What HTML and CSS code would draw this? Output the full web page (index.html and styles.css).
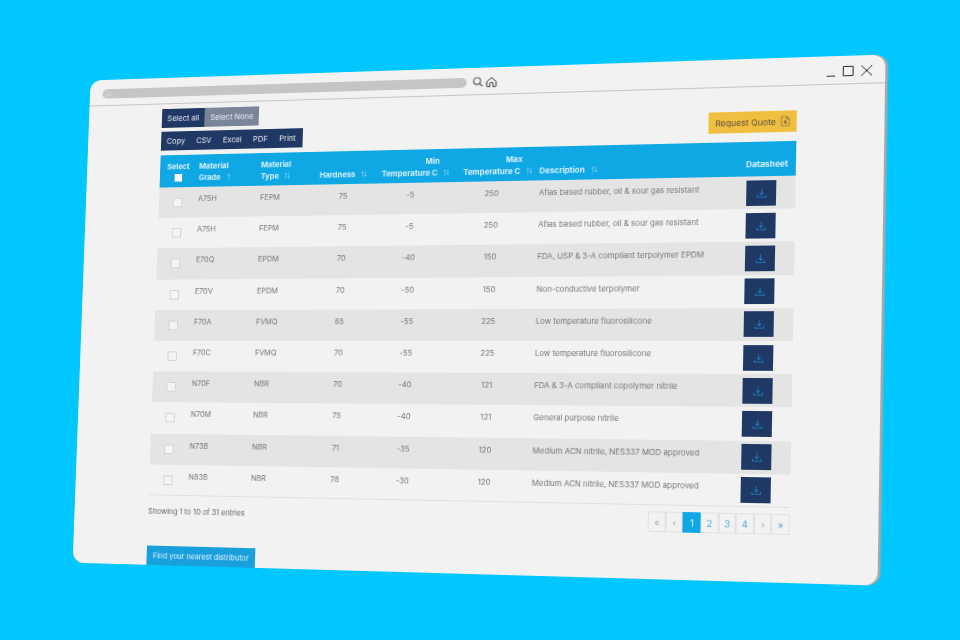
FILE: index.html
```html
<!DOCTYPE html>
<html lang="en">
<head>
  <meta charset="UTF-8" />
  <title>Material Grades</title>
  <link rel="stylesheet" href="styles.css">
</head>
<body>

  <div class="window">
    <div class="titlebar">
      <div class="address">
        <svg class="address-icon" viewBox="0 0 10 8"><path d="M1 1.5h3M1 4h3M1 6.5h8M6 1.5h3M6 4h3" /></svg>
      </div>
      <svg class="nav-icon search-icon" viewBox="0 0 12 12"><circle cx="5" cy="5" r="3.8" /><path d="M8 8l3 3" /></svg>
      <svg class="nav-icon home-icon" viewBox="0 0 12 12"><path d="M1.3 5.6L6 1.4l4.7 4.2v4.2a.9.9 0 0 1-.9.9H7.7V8a1.7 1.7 0 0 0-3.4 0v2.7H2.2a.9.9 0 0 1-.9-.9z" /></svg>
      <div class="window-controls">
        <svg viewBox="0 0 12 12"><path d="M3 10.5h8" /></svg>
        <svg viewBox="0 0 12 12"><path d="M1.5 1.5h9v9h-9z" /></svg>
        <svg viewBox="0 0 12 12"><path d="M1 1l10 10M11 1L1 11" /></svg>
      </div>
    </div>

    <div class="content">
      <div class="toolbar">
        <div class="toolbar-left">
          <div class="btn-group">
            <span class="btn">Select all</span>
            <span class="btn btn-muted">Select None</span>
          </div>
          <div class="btn-group export">
            <span class="btn">Copy</span>
            <span class="btn">CSV</span>
            <span class="btn">Excel</span>
            <span class="btn">PDF</span>
            <span class="btn">Print</span>
          </div>
        </div>
        <span class="quote">Request Quote
          <svg viewBox="0 0 10 12"><path d="M1 1h5.5L9 3.5V11H1zM6.5 1v2.5H9" /><path d="M5 4.6v4.2M6.2 5.4H4.4a.8.8 0 0 0 0 1.6h1.2a.8.8 0 0 1 0 1.6H3.8" /></svg>
        </span>
      </div>

      <table class="grades">
        <colgroup>
          <col class="c-select"><col class="c-grade"><col class="c-type"><col class="c-hard">
          <col class="c-min"><col class="c-max"><col class="c-desc"><col class="c-sheet">
        </colgroup>
        <thead>
          <tr>
            <th class="center th-select">Select<span class="head-check"></span></th>
            <th>Material<br>Grade <svg class="sort" viewBox="0 0 8 8"><path d="M4 7V1M2 3l2-2 2 2" /></svg></th>
            <th>Material<br>Type <svg class="sort" viewBox="0 0 8 8"><path d="M2.5 7V1.5M1 3l1.5-1.5L4 3M5.5 1v5.5M4 5l1.5 1.5L7 5" /></svg></th>
            <th class="center">Hardness <svg class="sort" viewBox="0 0 8 8"><path d="M2.5 7V1.5M1 3l1.5-1.5L4 3M5.5 1v5.5M4 5l1.5 1.5L7 5" /></svg></th>
            <th class="temp">Min<span class="sort-gap"></span><br>Temperature C <svg class="sort" viewBox="0 0 8 8"><path d="M2.5 7V1.5M1 3l1.5-1.5L4 3M5.5 1v5.5M4 5l1.5 1.5L7 5" /></svg></th>
            <th class="temp">Max<span class="sort-gap"></span><br>Temperature C <svg class="sort" viewBox="0 0 8 8"><path d="M2.5 7V1.5M1 3l1.5-1.5L4 3M5.5 1v5.5M4 5l1.5 1.5L7 5" /></svg></th>
            <th>Description <svg class="sort" viewBox="0 0 8 8"><path d="M2.5 7V1.5M1 3l1.5-1.5L4 3M5.5 1v5.5M4 5l1.5 1.5L7 5" /></svg></th>
            <th class="center sheet-head">Datasheet</th>
          </tr>
        </thead>
        <tbody id="rows">
          <tr><td class="check"><span></span></td><td>A75H</td><td>FEPM</td><td class="center">75</td><td class="center">-5</td><td class="center">250</td><td>Aflas based rubber, oil &amp; sour gas resistant</td><td class="sheet"><a class="dl"><svg viewBox="0 0 12 12"><path d="M6 1.5v6.2M3.8 5.6L6 7.8l2.2-2.2M1.5 8v2.5h9V8" /></svg></a></td></tr>
          <tr><td class="check"><span></span></td><td>A75H</td><td>FEPM</td><td class="center">75</td><td class="center">-5</td><td class="center">250</td><td>Aflas based rubber, oil &amp; sour gas resistant</td><td class="sheet"><a class="dl"><svg viewBox="0 0 12 12"><path d="M6 1.5v6.2M3.8 5.6L6 7.8l2.2-2.2M1.5 8v2.5h9V8" /></svg></a></td></tr>
          <tr><td class="check"><span></span></td><td>E70Q</td><td>EPDM</td><td class="center">70</td><td class="center">-40</td><td class="center">150</td><td>FDA, USP &amp; 3-A compliant terpolymer EPDM</td><td class="sheet"><a class="dl"><svg viewBox="0 0 12 12"><path d="M6 1.5v6.2M3.8 5.6L6 7.8l2.2-2.2M1.5 8v2.5h9V8" /></svg></a></td></tr>
          <tr><td class="check"><span></span></td><td>E70V</td><td>EPDM</td><td class="center">70</td><td class="center">-50</td><td class="center">150</td><td>Non-conductive terpolymer</td><td class="sheet"><a class="dl"><svg viewBox="0 0 12 12"><path d="M6 1.5v6.2M3.8 5.6L6 7.8l2.2-2.2M1.5 8v2.5h9V8" /></svg></a></td></tr>
          <tr><td class="check"><span></span></td><td>F70A</td><td>FVMQ</td><td class="center">65</td><td class="center">-55</td><td class="center">225</td><td>Low temperature fluorosilicone</td><td class="sheet"><a class="dl"><svg viewBox="0 0 12 12"><path d="M6 1.5v6.2M3.8 5.6L6 7.8l2.2-2.2M1.5 8v2.5h9V8" /></svg></a></td></tr>
          <tr><td class="check"><span></span></td><td>F70C</td><td>FVMQ</td><td class="center">70</td><td class="center">-55</td><td class="center">225</td><td>Low temperature fluorosilicone</td><td class="sheet"><a class="dl"><svg viewBox="0 0 12 12"><path d="M6 1.5v6.2M3.8 5.6L6 7.8l2.2-2.2M1.5 8v2.5h9V8" /></svg></a></td></tr>
          <tr><td class="check"><span></span></td><td>N70F</td><td>NBR</td><td class="center">70</td><td class="center">-40</td><td class="center">121</td><td>FDA &amp; 3-A compliant copolymer nitrile</td><td class="sheet"><a class="dl"><svg viewBox="0 0 12 12"><path d="M6 1.5v6.2M3.8 5.6L6 7.8l2.2-2.2M1.5 8v2.5h9V8" /></svg></a></td></tr>
          <tr><td class="check"><span></span></td><td>N70M</td><td>NBR</td><td class="center">75</td><td class="center">-40</td><td class="center">121</td><td>General purpose nitrile</td><td class="sheet"><a class="dl"><svg viewBox="0 0 12 12"><path d="M6 1.5v6.2M3.8 5.6L6 7.8l2.2-2.2M1.5 8v2.5h9V8" /></svg></a></td></tr>
          <tr><td class="check"><span></span></td><td>N73B</td><td>NBR</td><td class="center">71</td><td class="center">-35</td><td class="center">120</td><td>Medium ACN nitrile, NES337 MOD approved</td><td class="sheet"><a class="dl"><svg viewBox="0 0 12 12"><path d="M6 1.5v6.2M3.8 5.6L6 7.8l2.2-2.2M1.5 8v2.5h9V8" /></svg></a></td></tr>
          <tr><td class="check"><span></span></td><td>N83B</td><td>NBR</td><td class="center">78</td><td class="center">-30</td><td class="center">120</td><td>Medium ACN nitrile, NES337 MOD approved</td><td class="sheet"><a class="dl"><svg viewBox="0 0 12 12"><path d="M6 1.5v6.2M3.8 5.6L6 7.8l2.2-2.2M1.5 8v2.5h9V8" /></svg></a></td></tr>
        </tbody>
      </table>

      <div class="table-foot">
        <span class="info">Showing 1 to 10 of 31 entries</span>
        <div class="pager">
          <span class="page off">«</span>
          <span class="page off">‹</span>
          <span class="page current">1</span>
          <span class="page">2</span>
          <span class="page">3</span>
          <span class="page">4</span>
          <span class="page off">›</span>
          <span class="page">»</span>
        </div>
      </div>

      <span class="distributor">Find your nearest distributor</span>
    </div>
  </div>

</body>
</html>
```

FILE: styles.css
```css
body {
  margin: 0;
  height: 640px;
  overflow: hidden;
  background: #00c7ff;
  font-family: Inter, "Liberation Sans", sans-serif;
  color: #777;
}

/* flat 800x510 window, tilted onto the screenshot's corners */
.window {
  position: absolute;
  top: 0;
  left: 0;
  width: 800px;
  height: 510px;
  display: flex;
  flex-direction: column;
  background: #f2f2f2;
  border-radius: 12px;
  box-shadow: 2.5px 0 0 #a8a8a8;
  overflow: hidden;
  transform-origin: 0 0;
  transform: matrix3d(0.892675, -0.0386, 0, -0.00011415, -0.03698, 0.93112, 0, -0.000025896, 0, 0, 1, 0, 90.5, 80.4, 0, 1);
  filter: blur(0.5px);
}

.titlebar {
  display: flex;
  align-items: center;
  height: 28px;
  flex: none;
  box-sizing: border-box;
  padding: 2px 11px 0 14px;
  border-bottom: 1px solid #c4c4c4;
}

.address {
  width: 384px;
  height: 10px;
  border-radius: 5px;
  background: #c5c5c5;
  display: flex;
  align-items: center;
  padding-left: 3px;
  box-sizing: border-box;
}

.address-icon {
  width: 7px;
  height: 6px;
  fill: none;
  stroke: #e4e4e4;
  stroke-width: 1;
}

.nav-icon {
  width: 11px;
  height: 11px;
  fill: none;
  stroke: #333;
  stroke-width: 1;
}

.search-icon {
  margin-left: 6px;
}

.home-icon {
  width: 12px;
  height: 12px;
  margin-left: 2px;
}

.window-controls {
  margin-left: auto;
  display: flex;
  gap: 5px;
}

.window-controls svg {
  width: 12px;
  height: 12px;
  fill: none;
  stroke: #333;
  stroke-width: 1;
}

.content {
  flex: 1;
  display: flex;
  flex-direction: column;
  padding: 4px 81px 0 80px;
}

.toolbar {
  display: flex;
  justify-content: space-between;
  align-items: flex-end;
  height: 45px;
  margin-bottom: 5px;
}

.toolbar-left {
  display: flex;
  flex-direction: column;
  gap: 4px;
}

.btn-group {
  display: flex;
  align-self: flex-start;
  height: 20px;
  background: #1f3864;
}

.btn {
  display: flex;
  align-items: center;
  padding: 0 6px;
  font-size: 8px;
  color: #e8ecf3;
  white-space: nowrap;
}

.btn-muted {
  background: #7a8599;
}

.export {
  padding: 0 1px 0 0;
}

.quote {
  display: flex;
  align-items: center;
  justify-content: center;
  gap: 4px;
  width: 83px;
  height: 21px;
  margin-bottom: 4px;
  background: #f0bf40;
  color: #5a5344;
  font-size: 8.2px;
}

.quote svg {
  width: 9px;
  height: 11px;
  fill: none;
  stroke: #5a5344;
  stroke-width: 0.6;
}

.grades {
  width: 639px;
  border-collapse: collapse;
  table-layout: fixed;
  font-size: 7.7px;
}

.c-select { width: 39px; }
.c-grade { width: 66px; }
.c-type { width: 58px; }
.c-hard { width: 64px; }
.c-min { width: 78px; }
.c-max { width: 85px; }
.c-desc { width: 185px; }
.c-sheet { width: 64px; }

.grades th {
  height: 34px;
  box-sizing: border-box;
  padding: 3px 3px 4px;
  background: #10a7e5;
  color: #d6f0fb;
  font-size: 7.9px;
  line-height: 12px;
  font-weight: 700;
  text-align: left;
  vertical-align: bottom;
  white-space: nowrap;
}

.grades .center {
  text-align: center;
}

.grades .temp {
  text-align: right;
  padding-right: 1px;
}

.grades .temp + .temp {
  padding-right: 3px;
}

.sort-gap {
  display: inline-block;
  width: 11px;
}

.grades .th-select {
  padding-bottom: 6px;
}

.grades .sheet-head {
  padding-bottom: 6px;
  padding-left: 10px;
  padding-right: 0;
}

.head-check {
  display: block;
  width: 8px;
  height: 8px;
  margin: 2px auto 0;
  background: #fff;
}

.sort {
  width: 8px;
  height: 8px;
  margin-left: 3px;
  vertical-align: -1px;
  fill: none;
  stroke: #7fd0f0;
  stroke-width: 0.7;
}

.grades td {
  height: 32.2px;
  padding: 7px 3px 0;
  box-sizing: border-box;
  vertical-align: top;
  line-height: 11px;
  white-space: nowrap;
}

/* temperature values stay centred on the original column lines */
.grades td:nth-child(5) {
  padding-right: 7px;
}

.grades td:nth-child(6) {
  padding-right: 6px;
}

.grades tbody tr:nth-child(odd) td {
  background: #e4e4e4;
}

.grades tbody tr:last-child td {
  border-bottom: 1px solid #e0e0e0;
}

.grades .check {
  padding: 0;
  vertical-align: middle;
}

.check span {
  display: block;
  width: 8px;
  height: 8px;
  margin: auto;
  background: #f4f4f4;
  border: 0.5px solid #d4d4d4;
}

.grades .sheet {
  padding: 0;
  vertical-align: middle;
}

.dl {
  display: flex;
  align-items: center;
  justify-content: center;
  width: 28px;
  height: 25px;
  margin-left: 18px;
  background: #1f3864;
}

.dl svg {
  width: 11px;
  height: 11px;
  fill: none;
  stroke: #1c86c4;
  stroke-width: 0.8;
}

.table-foot {
  display: flex;
  justify-content: space-between;
  align-items: center;
  margin-top: 6px;
}

.info {
  font-size: 7.7px;
  color: #666;
}

.pager {
  display: flex;
  height: 20px;
}

.page {
  display: flex;
  align-items: center;
  justify-content: center;
  width: 16.6px;
  box-sizing: border-box;
  border: 0.5px solid #e2e2e2;
  color: #5aa9d8;
  font-size: 9px;
}

.page.off {
  color: #a8a8a8;
}

.page.current {
  background: #10a7e5;
  border-color: #10a7e5;
  color: #e6f5fc;
}

.distributor {
  margin-top: auto;
  align-self: flex-start;
  display: flex;
  align-items: center;
  justify-content: center;
  width: 115px;
  height: 20px;
  background: #1a9fdd;
  color: #dff2fb;
  font-size: 7.6px;
}
```
